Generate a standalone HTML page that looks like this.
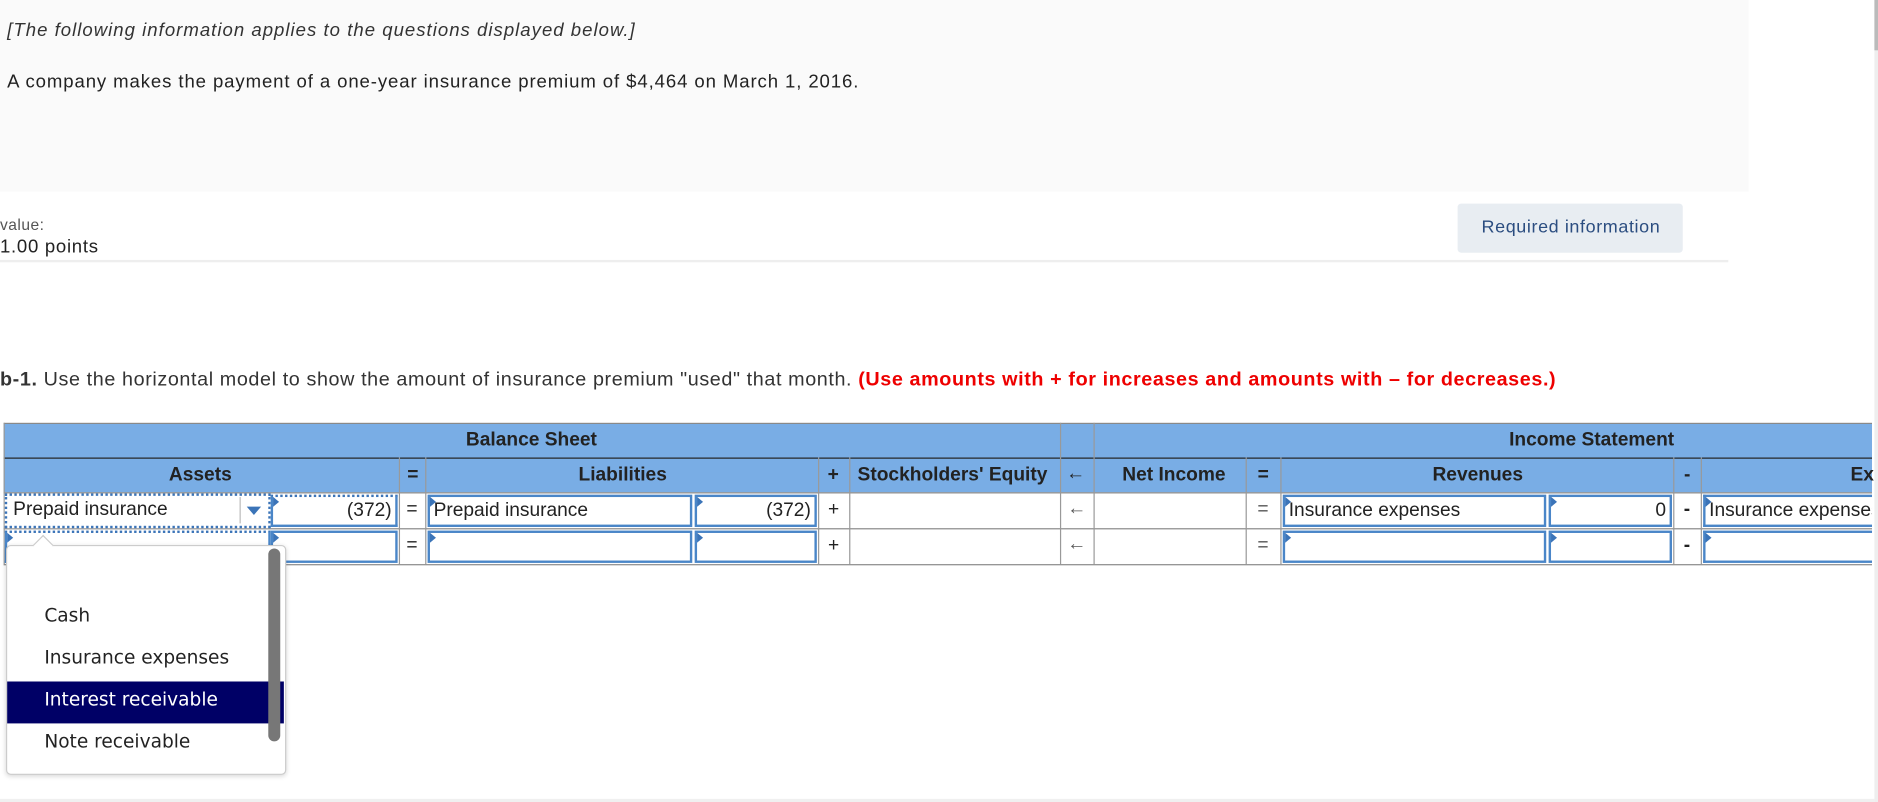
<!DOCTYPE html>
<html><head><meta charset="utf-8"><style>
html,body{margin:0;padding:0;width:1878px;height:802px;overflow:hidden;background:#fff}
#w{position:absolute;left:0;top:0;width:1568px;height:670px;transform:scale(1.1977);transform-origin:0 0;font-family:"Liberation Sans",Arial,sans-serif;color:#222}
.a{position:absolute;white-space:nowrap}
.c{position:absolute;box-sizing:border-box}
.hd{background:#79ade5}
.b{font-weight:bold;font-size:16px;color:#222}
.inp{position:absolute;box-sizing:border-box;border:2px solid #4a86c8;border-top-width:2px;background:#fff;height:27px;font-size:16px;line-height:23px;padding:0 3px;overflow:hidden;white-space:nowrap}
.inp:before{content:"";position:absolute;left:-1px;top:-1px;border-left:6px solid #3b74b8;border-top:5px solid transparent;border-bottom:5px solid transparent}
.vl{position:absolute;width:1px;background:#999}
.hl{position:absolute;height:1px;background:#888}
.sym{position:absolute;font-size:16px;text-align:center}
</style></head><body><div id="w">
<div class="c" style="left:0;top:0;width:1460px;height:160px;background:#fafafa"></div>
<div class="a" style="left:6px;top:17px;font-size:15.5px;font-style:italic;color:#333;letter-spacing:0.85px">[The following information applies to the questions displayed below.]</div>
<div class="a" style="left:6px;top:60px;font-size:15.5px;color:#222;letter-spacing:0.75px">A company makes the payment of a one-year insurance premium of $4,464 on March 1, 2016.</div>
<div class="c" style="left:1565px;top:0;width:3px;height:670px;background:#eee"></div>
<div class="c" style="left:1565px;top:0;width:3px;height:42px;background:#bbb"></div>
<div class="a" style="left:0;top:180px;font-size:13px;color:#555;letter-spacing:0.4px">value:</div>
<div class="a" style="left:0;top:198px;font-size:15.5px;color:#222;letter-spacing:0.6px">1.00 points</div>
<div class="c" style="left:1217px;top:170px;width:188px;height:41px;background:#e8edf2;border-radius:3px"></div>
<div class="a" style="left:1237px;top:181px;font-size:15px;color:#2b4d80;letter-spacing:0.5px">Required information</div>
<div class="c" style="left:0;top:217px;width:1443px;height:2px;background:#eee"></div>
<div class="a" style="left:0;top:308px;font-size:16.5px;color:#333;letter-spacing:0.5px"><b>b-1.</b> Use the horizontal model to show the amount of insurance premium "used" that month. <b style="color:#e00">(Use amounts with + for increases and amounts with – for decreases.)</b></div>

<!-- table -->
<div class="c hd" style="left:3px;top:354px;width:1560px;height:57px"></div>
<div class="hl" style="left:3px;top:353px;width:1560px;background:#888"></div>
<div class="hl" style="left:3px;top:382px;width:1560px;background:#222"></div>
<div class="hl" style="left:3px;top:411px;width:1560px"></div>
<div class="hl" style="left:3px;top:441px;width:1560px"></div>
<div class="hl" style="left:3px;top:471px;width:1560px"></div>
<div class="vl" style="left:3px;top:353px;height:118px"></div>
<div class="vl" style="left:885px;top:353px;height:118px"></div>
<div class="vl" style="left:913px;top:353px;height:118px"></div>
<div class="vl" style="left:333px;top:382px;height:89px"></div>
<div class="vl" style="left:355px;top:382px;height:89px"></div>
<div class="vl" style="left:683px;top:382px;height:89px"></div>
<div class="vl" style="left:709px;top:382px;height:89px"></div>
<div class="vl" style="left:1040px;top:382px;height:89px"></div>
<div class="vl" style="left:1069px;top:382px;height:89px"></div>
<div class="vl" style="left:1397px;top:382px;height:89px"></div>
<div class="vl" style="left:1420px;top:382px;height:89px"></div>
<div class="a b" style="left:389px;top:359px">Balance Sheet</div>
<div class="a b" style="left:1260px;top:359px">Income Statement</div>
<div class="a b" style="left:141px;top:388px">Assets</div>
<div class="a b" style="left:340px;top:388px">=</div>
<div class="a b" style="left:483px;top:388px">Liabilities</div>
<div class="a b" style="left:691px;top:388px">+</div>
<div class="a b" style="left:716px;top:388px">Stockholders' Equity</div>
<div class="a" style="left:890px;top:387px;font-size:16px">←</div>
<div class="a b" style="left:937px;top:388px">Net Income</div>
<div class="a b" style="left:1050px;top:388px">=</div>
<div class="a b" style="left:1196px;top:388px">Revenues</div>
<div class="a b" style="left:1406px;top:388px">-</div>
<div class="a b" style="left:1545px;top:388px">Ex</div>

<!-- row 1 -->
<div class="c" style="left:4px;top:412px;width:222px;height:29px;border:2px dotted #3b74b8;background:#fff"></div>
<div class="a" style="left:11px;top:417px;font-size:16px">Prepaid insurance</div>
<div class="c" style="left:200px;top:415px;width:1px;height:22px;background:#bbb"></div>
<div class="a" style="left:206px;top:423px;border-left:6px solid transparent;border-right:6px solid transparent;border-top:7px solid #3b74b8;width:0;height:0"></div>
<div class="inp" style="left:226px;top:413px;width:106px;text-align:right;border-top:2px dotted #3b74b8">(372)</div>
<div class="sym" style="left:333px;top:417px;width:22px">=</div>
<div class="inp" style="left:357px;top:413px;width:221px">Prepaid insurance</div>
<div class="inp" style="left:580px;top:413px;width:102px;text-align:right">(372)</div>
<div class="sym" style="left:683px;top:417px;width:26px">+</div>
<div class="sym" style="left:885px;top:416px;width:28px;color:#555">←</div>
<div class="sym" style="left:1040px;top:417px;width:29px;color:#555">=</div>
<div class="inp" style="left:1071px;top:413px;width:220px">Insurance expenses</div>
<div class="inp" style="left:1293px;top:413px;width:103px;text-align:right">0</div>
<div class="sym" style="left:1397px;top:417px;width:23px;font-weight:bold">-</div>
<div class="inp" style="left:1422px;top:413px;width:141px;border-right:none">Insurance expenses</div>
<!-- row 2 -->
<div class="inp" style="left:4px;top:443px;width:222px;border-top:2px dotted #3b74b8"></div>
<div class="inp" style="left:226px;top:443px;width:106px"></div>
<div class="sym" style="left:333px;top:447px;width:22px">=</div>
<div class="inp" style="left:357px;top:443px;width:221px"></div>
<div class="inp" style="left:580px;top:443px;width:102px"></div>
<div class="sym" style="left:683px;top:447px;width:26px">+</div>
<div class="sym" style="left:885px;top:446px;width:28px;color:#555">←</div>
<div class="sym" style="left:1040px;top:447px;width:29px;color:#555">=</div>
<div class="inp" style="left:1071px;top:443px;width:220px"></div>
<div class="inp" style="left:1293px;top:443px;width:103px"></div>
<div class="sym" style="left:1397px;top:447px;width:23px;font-weight:bold">-</div>
<div class="inp" style="left:1422px;top:443px;width:141px;border-right:none"></div>

<!-- dropdown -->
<div class="c" style="left:5px;top:455px;width:234px;height:192px;background:#fff;border:1px solid #ccc;border-radius:4px;box-shadow:0 1px 4px rgba(0,0,0,.15)"></div>
<div class="c" style="left:30px;top:449px;width:12px;height:12px;background:#fff;border-left:1px solid #ccc;border-top:1px solid #ccc;transform:rotate(45deg)"></div>
<div class="c" style="left:6px;top:569px;width:231px;height:35px;background:#000066"></div>
<div class="c" style="left:224px;top:458px;width:10px;height:161px;background:#777;border-radius:5px"></div>
<div class="a" style="left:37px;top:505px;font-family:'DejaVu Sans',sans-serif;font-size:15.5px;color:#222">Cash</div>
<div class="a" style="left:37px;top:540px;font-family:'DejaVu Sans',sans-serif;font-size:15.5px;color:#222">Insurance expenses</div>
<div class="a" style="left:37px;top:575px;font-family:'DejaVu Sans',sans-serif;font-size:15.5px;color:#fff">Interest receivable</div>
<div class="a" style="left:37px;top:610px;font-family:'DejaVu Sans',sans-serif;font-size:15.5px;color:#222">Note receivable</div>
<div class="c" style="left:0;top:667px;width:1565px;height:3px;background:#f0f0f0"></div>
</div></body></html>
